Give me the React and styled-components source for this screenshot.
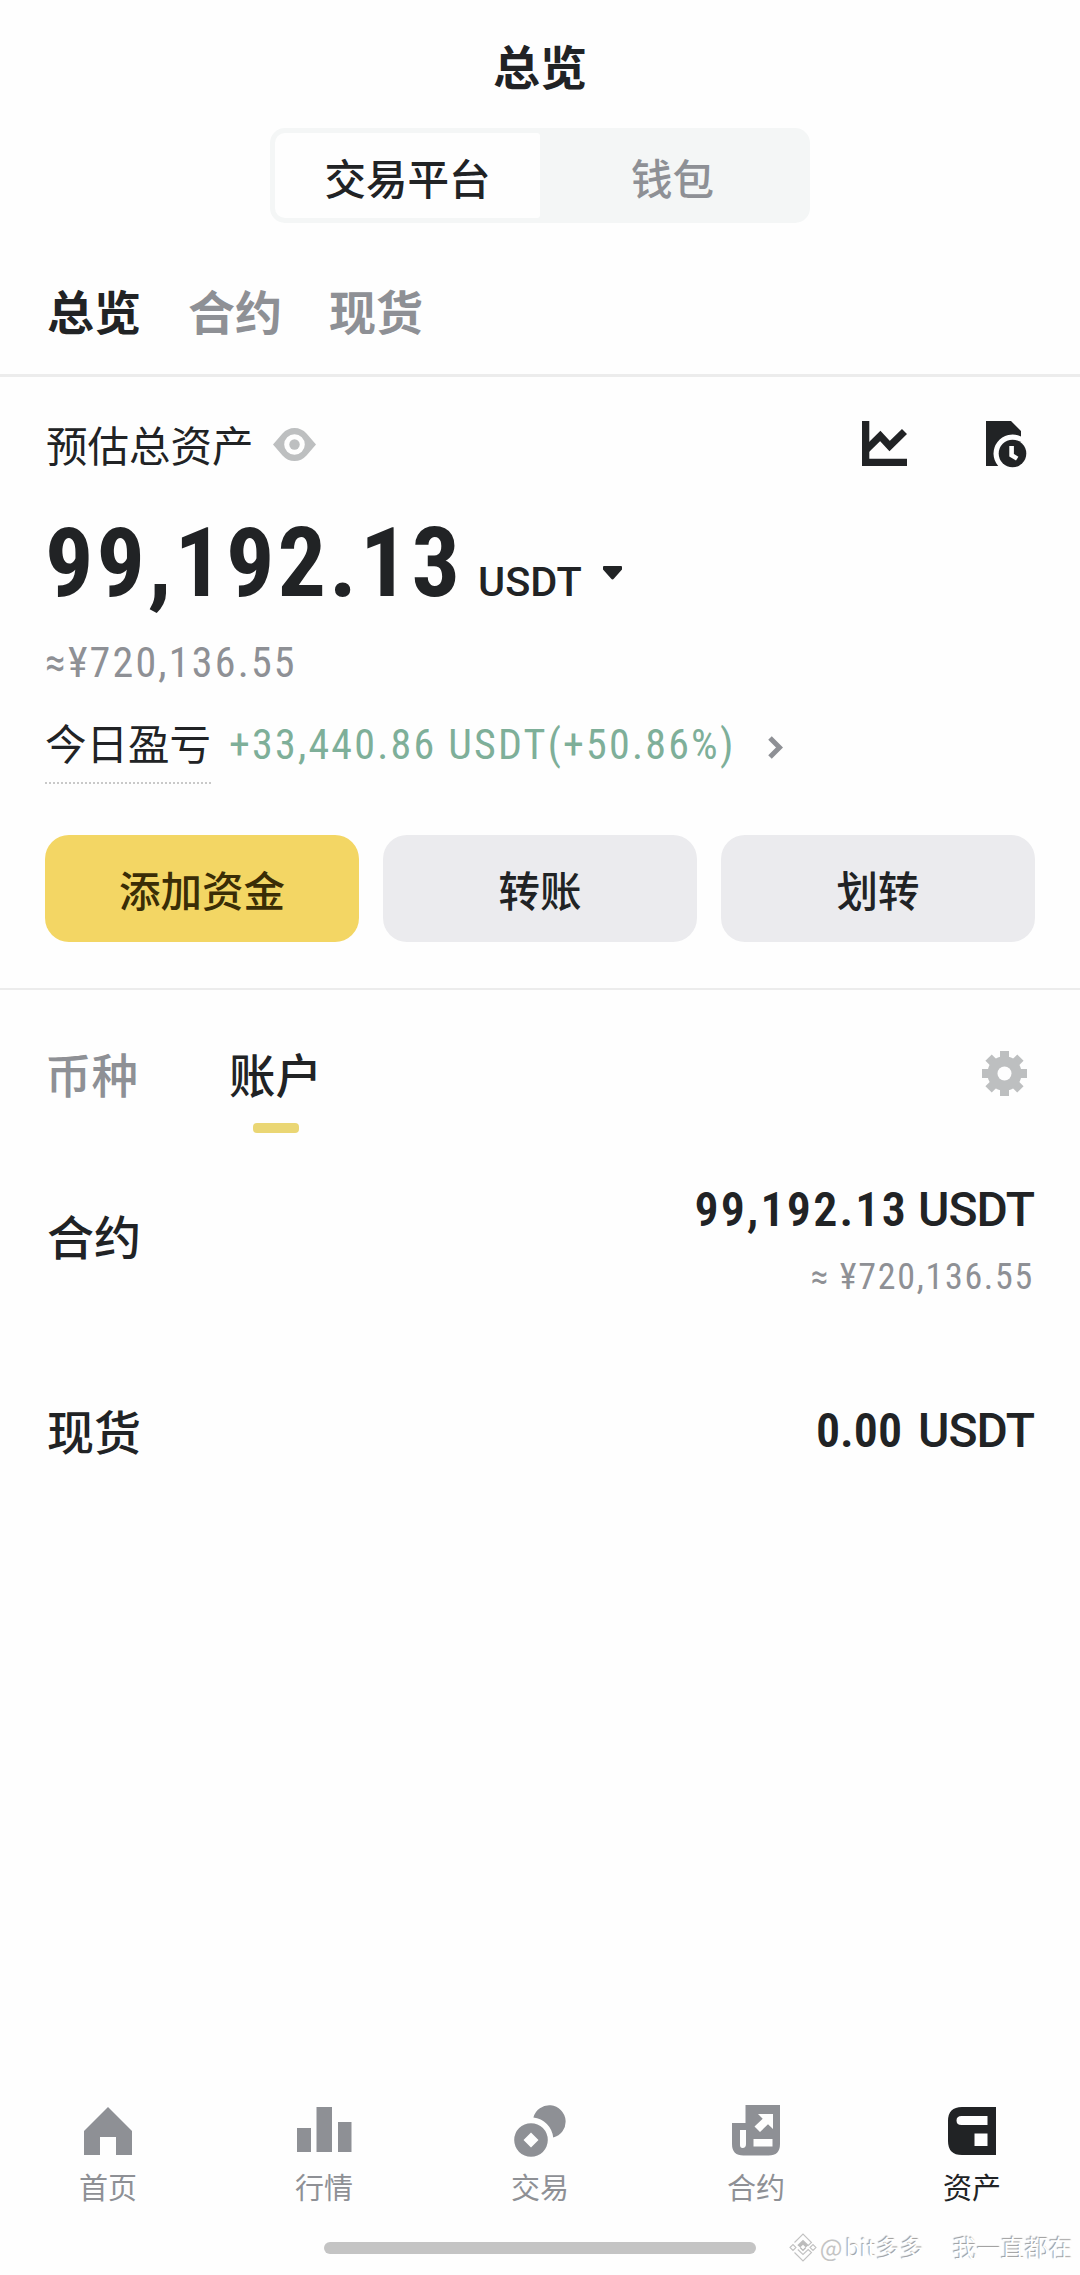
import React, { useState } from 'react'
import styled, { createGlobalStyle } from 'styled-components'

const colors = {
    ink: '#212325',
    gray: '#8e9095',
    lightGray: '#bdbfc0',
    line: '#ececec',
    green: '#7eaf99',
    yellow: '#f3d664',
    button: '#ebebee',
    segment: '#f4f6f6',
    white: '#fefefe',
}

const GlobalStyle = createGlobalStyle`
    * {
        box-sizing: border-box;
    }
    body {
        margin: 0;
        background: ${colors.white};
        color: ${colors.ink};
        font-family: "Noto Sans CJK SC", sans-serif;
    }
    button {
        border: 0;
        padding: 0;
        background: none;
        font-family: inherit;
        color: inherit;
        cursor: pointer;
    }
    svg {
        display: block;
        flex: none;
    }
`;


/* ---------- icons ---------- */

const EyeIcon = () => (
    <svg width="43" height="33" viewBox="0 0 43 33">
        <path
            fill={colors.lightGray}
            fillRule="evenodd"
            d="M0 16.5 L9.5 5.5 Q14.5 0 21.5 0 Q28.5 0 33.5 5.5 L43 16.5 L33.5 27.5 Q28.5 33 21.5 33 Q14.5 33 9.5 27.5 Z M21.5 6.2 a10.3 10.3 0 1 0 0 20.6 a10.3 10.3 0 1 0 0 -20.6 Z"
        />
        <circle cx="21.5" cy="16.5" r="5.2" fill={colors.lightGray} />
    </svg>
)

const ChartIcon = () => (
    <svg width="45" height="45" viewBox="0 0 45 45">
        <path d="M0 0 H7.3 V37.7 H45 V45 H0 Z" fill={colors.ink} />
        <path d="M4 29 L18.3 15 L27.6 25 L42.5 10.5" fill="none" stroke={colors.ink} strokeWidth="7.2" />
    </svg>
)

const HistoryIcon = () => (
    <svg width="41" height="47" viewBox="0 0 41 47">
        <path d="M0 0 H25 L35 10 V15.5 A19 19 0 0 0 12.2 45 H0 Z" fill={colors.ink} />
        <circle cx="26.5" cy="32.5" r="13.8" fill={colors.ink} />
        <path d="M25.6 25 V34.2 L31.2 37.6" fill="none" stroke={colors.white} strokeWidth="4.6" />
    </svg>
)

const CaretIcon = () => (
    <svg width="19" height="14" viewBox="0 0 19 14">
        <path d="M1 0 H18 Q19 0 19 1 V3.4 L11 12.6 Q9.5 14.4 8 12.6 L0 3.4 V1 Q0 0 1 0 Z" fill={colors.ink} />
    </svg>
)

const ChevronIcon = () => (
    <svg width="15" height="23" viewBox="0 0 15 23">
        <path d="M2 2 L11.5 11.5 L2 21" fill="none" stroke={colors.gray} strokeWidth="5" />
    </svg>
)

const GearIcon = () => (
    <svg width="45" height="45" viewBox="-22.5 -22.5 45 45">
        <g fill={colors.lightGray}>
            {[0, 45, 90, 135].map(angle => (
                <rect
                    key={angle}
                    x="-4.5"
                    y="-22.5"
                    width="9"
                    height="45"
                    transform={`rotate(${angle})`}
                />
            ))}
            <circle r="17.2" />
        </g>
        <circle r="7" fill={colors.white} />
    </svg>
)

const HomeIcon = () => (
    <svg width="48" height="52" viewBox="0 0 48 52">
        <path d="M24 2 L48 26 V50 H32 V32 H16 V50 H0 V26 Z" fill="currentColor" />
    </svg>
)

const MarketIcon = () => (
    <svg width="55" height="52" viewBox="0 0 55 52">
        <path d="M0 23 H14 V47 H0 Z M19.5 2 H35 V47 H19.5 Z M41 17 H54.5 V47 H41 Z" fill="currentColor" />
    </svg>
)

const TradeIcon = () => (
    <svg width="52" height="52" viewBox="0 0 52 52">
        <path d="M19.4 12.4 A16.4 16.4 0 1 1 39.2 32.6 A22.5 22.5 0 0 0 19.4 12.4 Z" fill="currentColor" />
        <path
            d="M17 18.2 a16.8 16.8 0 1 0 0 33.6 a16.8 16.8 0 1 0 0 -33.6 Z M17 27.5 L24.5 35 L17 42.5 L9.5 35 Z"
            fill="currentColor"
            fillRule="evenodd"
        />
    </svg>
)

const FuturesIcon = () => (
    <svg width="48" height="52" viewBox="0 0 48 52">
        <path d="M13.5 0 H48 V39 Q48 50.5 36.5 50.5 H11.5 Q0 50.5 0 39 V18 H13.5 Z" fill="currentColor" />
        <path d="M8 25 H14 V39 Q14 43 10.5 43 Q8 43 8 40 Z M21.5 34 H40.5 V41.5 H21.5 Z" fill={colors.white} />
        <path d="M26 9 H41 V24 L36 19.3 L28 27 L22.5 21.5 L30.7 13.7 Z" fill={colors.white} />
    </svg>
)

const AssetsIcon = () => (
    <svg width="48" height="52" viewBox="0 0 48 52">
        <path
            d="M14 2 H48 V50 H14 Q0 50 0 36 V16 Q0 2 14 2 Z M13.5 11 Q8.5 11 8.5 15.5 Q8.5 20 13.5 20 H39.5 V11 Z M26.5 28.5 V41 H39.5 V28.5 Z"
            fill="currentColor"
            fillRule="evenodd"
        />
    </svg>
)

const MarkIcon = () => (
    <svg width="28" height="29" viewBox="0 0 28 29">
        <g fill="none" stroke="#c2c2c2" strokeWidth="1.1">
            <path d="M5.5 9.5 L14 1 L22.5 9.5 L19.2 12.5 L14 7.5 L8.8 12.5" />
            <path d="M5.5 19.5 L14 28 L22.5 19.5 L19.2 16.5 L14 21.5 L8.8 16.5" />
            <path d="M1 14.5 L4 11.5 L7 14.5 L4 17.5 Z M21 14.5 L24 11.5 L27 14.5 L24 17.5 Z" />
        </g>
        <path d="M8.8 12.5 L14 7.5 L19.2 12.5 L16.8 14.5 L14 11.8 L11.2 14.5 Z" fill="#bcbcbc" />
        <path d="M11.2 14.5 L14 17.3 L16.8 14.5" fill="none" stroke="#b5b5b5" strokeWidth="1.2" />
    </svg>
)


/* ---------- data ---------- */

const tabs = ['总览', '合约', '现货']

const navItems = [
    { label: '首页', icon: HomeIcon },
    { label: '行情', icon: MarketIcon },
    { label: '交易', icon: TradeIcon },
    { label: '合约', icon: FuturesIcon },
    { label: '资产', icon: AssetsIcon },
]


const App = () => {
    const [tab, setTab] = useState('总览')
    const [view, setView] = useState('账户')

    return (
        <Page>
            <GlobalStyle />
            <Title>总览</Title>

            <Segment>
                <SegmentItem $active>交易平台</SegmentItem>
                <SegmentItem>钱包</SegmentItem>
            </Segment>

            <Tabs>
                {tabs.map(name => (
                    <Tab key={name} $active={name === tab} onClick={() => setTab(name)}>{name}</Tab>
                ))}
            </Tabs>

            <Summary>
                <SummaryHeader>
                    <SummaryLabel>预估总资产</SummaryLabel>
                    <EyeIcon />
                    <SummaryTools>
                        <ChartIcon />
                        <HistoryIcon />
                    </SummaryTools>
                </SummaryHeader>
                <Total>
                    <TotalValue>99,192.13</TotalValue>
                    <TotalUnit>USDT</TotalUnit>
                    <CaretBox><CaretIcon /></CaretBox>
                </Total>
                <Fiat>≈¥720,136.55</Fiat>
                <Pnl>
                    <PnlLabel>今日盈亏</PnlLabel>
                    <PnlValue>+33,440.86 USDT(+50.86%)</PnlValue>
                    <ChevronIcon />
                </Pnl>
                <Actions>
                    <ActionButton $primary>添加资金</ActionButton>
                    <ActionButton>转账</ActionButton>
                    <ActionButton>划转</ActionButton>
                </Actions>
            </Summary>

            <ListHeader>
                {['币种', '账户'].map(name => (
                    <ListTab key={name} $active={name === view} onClick={() => setView(name)}>{name}</ListTab>
                ))}
                <GearIcon />
            </ListHeader>

            <AccountRow $top={46}>
                <AccountName $offset={26}>合约</AccountName>
                <AccountAmount>
                    <Amount>
                        <AmountValue $spacing={2.2}>99,192.13</AmountValue>
                        <AmountUnit $gap={10}>USDT</AmountUnit>
                    </Amount>
                    <AmountFiat>≈ ¥720,136.55</AmountFiat>
                </AccountAmount>
            </AccountRow>
            <AccountRow $top={101}>
                <AccountName>现货</AccountName>
                <AccountAmount>
                    <Amount>
                        <AmountValue>0.00</AmountValue>
                        <AmountUnit $gap={16}>USDT</AmountUnit>
                    </Amount>
                </AccountAmount>
            </AccountRow>

            <BottomNav>
                {navItems.map(({ label, icon: Icon }) => (
                    <NavItem key={label} $active={label === '资产'}>
                        <Icon />
                        <NavLabel>{label}</NavLabel>
                    </NavItem>
                ))}
            </BottomNav>
            <HomeBar />

            <Watermark>
                <MarkIcon />
                <At>@</At>
                <WatermarkText>bit多多</WatermarkText>
                <WatermarkText $gap={29}>我一直都在</WatermarkText>
            </Watermark>
        </Page>
    )
}

export default App


const Page = styled.div`
    position: relative;
    width: 1080px;
    height: 2275px;
    display: flex;
    flex-direction: column;
    overflow: hidden;
    background: ${colors.white};
`;
const Title = styled.h1`
    margin: 35px 0 33px;
    font-size: 47px;
    line-height: 60px;
    font-weight: 600;
    text-align: center;
`;
const Segment = styled.div`
    width: 540px;
    height: 95px;
    margin: 0 auto;
    padding: 5px;
    display: flex;
    border-radius: 15px;
    background: ${colors.segment};
`;
const SegmentItem = styled.button`
    flex: 1;
    padding-top: 3px;
    border-radius: ${props => (props.$active ? '10px 3px 3px 10px' : '0')};
    background: ${props => (props.$active ? colors.white : 'none')};
    color: ${props => (props.$active ? colors.ink : colors.gray)};
    font-size: 41.5px;
    line-height: 60px;
    font-weight: 500;
`;
const Tabs = styled.div`
    display: flex;
    gap: 47px;
    padding: 57px 47px 34px;
    border-bottom: 3px solid ${colors.line};
`;
const Tab = styled.button`
    font-size: 47px;
    line-height: 60px;
    font-weight: 700;
    color: ${props => (props.$active ? colors.ink : colors.gray)};
`;
const Summary = styled.section`
    padding: 37px 45px 46px;
    border-bottom: 2px solid ${colors.line};
`;
const SummaryHeader = styled.div`
    display: flex;
    align-items: center;
    height: 60px;
    gap: 19px;
`;
const SummaryLabel = styled.span`
    font-size: 41.5px;
    line-height: 60px;
    margin-left: 1px;
`;
const SummaryTools = styled.div`
    margin-left: auto;
    margin-right: 8px;
    display: flex;
    gap: 79px;
`;
const Total = styled.div`
    display: flex;
    align-items: baseline;
    height: 100px;
    margin-top: 39px;
    font-family: Roboto, sans-serif;
`;
const TotalValue = styled.span`
    font-size: 96px;
    line-height: 100px;
    font-weight: 700;
    font-stretch: condensed;
    letter-spacing: 3px;
`;
const TotalUnit = styled.span`
    margin-left: 15px;
    font-size: 41.5px;
    font-weight: 500;
`;
const CaretBox = styled.span`
    margin-left: 21px;
    padding-bottom: 16px;
`;
const Fiat = styled.div`
    margin-top: 25px;
    font-family: Roboto, sans-serif;
    font-size: 42px;
    line-height: 50px;
    font-stretch: condensed;
    letter-spacing: 2.2px;
    color: ${colors.gray};
`;
const Pnl = styled.div`
    display: flex;
    align-items: flex-start;
    margin-top: 30px;

    svg {
        margin: 18px 0 0 32px;
    }
`;
const PnlLabel = styled.span`
    padding-bottom: 16px;
    border-bottom: 2px dotted #c9c9c9;
    font-size: 41.5px;
    line-height: 48px;
`;
const PnlValue = styled.span`
    margin-left: 18px;
    font-family: Roboto, sans-serif;
    font-size: 42px;
    line-height: 54px;
    font-stretch: condensed;
    letter-spacing: 2.2px;
    color: ${colors.green};
`;
const Actions = styled.div`
    display: grid;
    grid-template-columns: repeat(3, 1fr);
    gap: 24px;
    margin-top: 51px;
`;
const ActionButton = styled.button`
    height: 107px;
    border-radius: 24px;
    background: ${props => (props.$primary ? colors.yellow : colors.button)};
    color: ${props => (props.$primary ? '#3a2d06' : colors.ink)};
    font-size: 41.5px;
    line-height: 60px;
    font-weight: 500;
`;
const ListHeader = styled.div`
    display: flex;
    align-items: flex-start;
    gap: 91px;
    padding: 53px 53px 0 45px;

    svg {
        margin: 8px 0 0 auto;
    }
`;
const ListTab = styled.button`
    display: flex;
    flex-direction: column;
    align-items: center;
    height: 90px;
    font-size: 46.5px;
    line-height: 60px;
    font-weight: 500;
    color: ${props => (props.$active ? colors.ink : colors.gray)};

    &::after {
        content: "";
        width: 46px;
        height: 10px;
        margin-top: 20px;
        border-radius: 4px;
        background: ${props => (props.$active ? '#ead674' : 'transparent')};
    }
`;
const AccountRow = styled.div`
    display: flex;
    justify-content: space-between;
    align-items: flex-start;
    margin-top: ${props => props.$top}px;
    padding: 0 45px 0 47px;
`;
const AccountName = styled.span`
    padding-top: ${props => props.$offset || 0}px;
    font-size: 47px;
    line-height: 60px;
    font-weight: 500;
`;
const AccountAmount = styled.div`
    font-family: Roboto, sans-serif;
    text-align: right;
`;
const Amount = styled.div`
    display: flex;
    justify-content: flex-end;
    margin-top: 1px;
    font-size: 48px;
    line-height: 60px;
`;
const AmountValue = styled.span`
    font-weight: 600;
    font-stretch: condensed;
    letter-spacing: ${props => props.$spacing || 0}px;
`;
const AmountUnit = styled.span`
    margin-left: ${props => props.$gap}px;
    margin-right: 1px;
    font-weight: 500;
    letter-spacing: -1px;
`;
const AmountFiat = styled.div`
    margin: 15px 1px 0 0;
    font-size: 36px;
    line-height: 44px;
    font-stretch: condensed;
    letter-spacing: 1.7px;
    color: ${colors.gray};
`;
const BottomNav = styled.nav`
    display: grid;
    grid-template-columns: repeat(5, 1fr);
    margin-top: auto;
`;
const NavItem = styled.button`
    display: flex;
    flex-direction: column;
    align-items: center;
    color: ${props => (props.$active ? colors.ink : colors.gray)};
`;
const NavLabel = styled.span`
    margin-top: 9px;
    font-size: 29px;
    line-height: 40px;
`;
const HomeBar = styled.div`
    width: 432px;
    height: 12px;
    margin: 36px auto 21px;
    border-radius: 6px;
    background: #c4c4c4;
`;
const Watermark = styled.div`
    position: absolute;
    right: 7px;
    bottom: 11px;
    display: flex;
    align-items: center;
    height: 34px;
    color: #fff;
    font-size: 24px;
    line-height: 34px;
    text-shadow: -1px -1px 1px #999;
    white-space: nowrap;
`;
const At = styled.span`
    margin: 0 3px;
    color: #c4c4c4;
    text-shadow: none;
`;
const WatermarkText = styled.span`
    margin-left: ${props => props.$gap || 0}px;
`;
